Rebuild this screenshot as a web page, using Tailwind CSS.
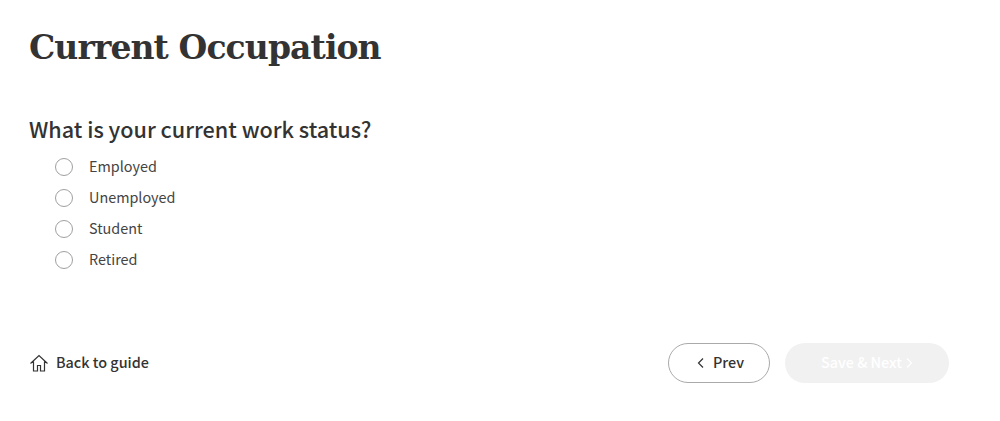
<!DOCTYPE html>
<html lang="en">
<head>
    <meta charset="UTF-8">
    <title>Current Occupation</title>
    <script src="https://cdn.jsdelivr.net/npm/@tailwindcss/browser@4"></script>
</head>
<body class="bg-white text-[#333] font-['Noto_Sans_CJK_SC','Noto_Sans',sans-serif] h-[421px] overflow-hidden">
    <div class="px-[29px] pt-[23px]">
        <!-- Heading -->
        <h1 class="font-['DejaVu_Serif','Liberation_Serif',serif] font-bold text-[33px] leading-[50px] tracking-[-0.9px]">Current Occupation</h1>

        <!-- Question -->
        <h2 class="mt-[43px] text-[21.6px] leading-[26px] font-medium">What is your current work status?</h2>
        <div class="mt-[8px] pl-[26px] flex flex-col text-[14.4px] text-[#444]">
            <label class="flex items-center h-[31px] gap-[16px]"><span class="w-[18px] h-[18px] mt-[2px] rounded-full border border-[#a0a0a0] bg-white"></span>Employed</label>
            <label class="flex items-center h-[31px] gap-[16px]"><span class="w-[18px] h-[18px] mt-[2px] rounded-full border border-[#a0a0a0] bg-white"></span>Unemployed</label>
            <label class="flex items-center h-[31px] gap-[16px]"><span class="w-[18px] h-[18px] mt-[2px] rounded-full border border-[#a0a0a0] bg-white"></span>Student</label>
            <label class="flex items-center h-[31px] gap-[16px]"><span class="w-[18px] h-[18px] mt-[2px] rounded-full border border-[#a0a0a0] bg-white"></span>Retired</label>
        </div>

        <!-- Footer -->
        <div class="mt-[69px] mr-[22px] flex items-center justify-between">
            <a class="flex items-center gap-[7px] text-[14.4px] font-medium">
                <svg class="w-[20px] h-[20px]" viewBox="0 0 20 20" fill="none" stroke="#333" stroke-width="1.2"><path d="M1.500 10.500 10 2.500l8.500 8M4.500 8.500V18h4v-5.500h3V18h4V8.500"/></svg>
                <span class="pb-[2px]">Back to guide</span>
            </a>
            <div class="flex items-center gap-[15px]">
                <button class="w-[102px] h-[40px] pl-[3px] rounded-full border border-[#aaa] flex items-center justify-center gap-[9px] text-[14.4px] font-medium">
                    <svg class="w-[7px] h-[10px]" viewBox="0 0 7 10" fill="none" stroke="#333" stroke-width="1.200"><path d="M6 .5 1.500 5 6 9.500"/></svg>
                    <span class="pb-[2px]">Prev</span>
                </button>
                <button class="w-[164px] h-[40px] rounded-full bg-[#f1f1f1] flex items-center justify-center gap-[4px] text-[14.4px] font-medium text-white">
                    <span class="pb-[2px]">Save &amp; Next</span>
                    <svg class="w-[7px] h-[10px]" viewBox="0 0 7 10" fill="none" stroke="#fff" stroke-width="1.200"><path d="M1 .5 5.500 5 1 9.500"/></svg>
                </button>
            </div>
        </div>
    </div>
</body>
</html>
